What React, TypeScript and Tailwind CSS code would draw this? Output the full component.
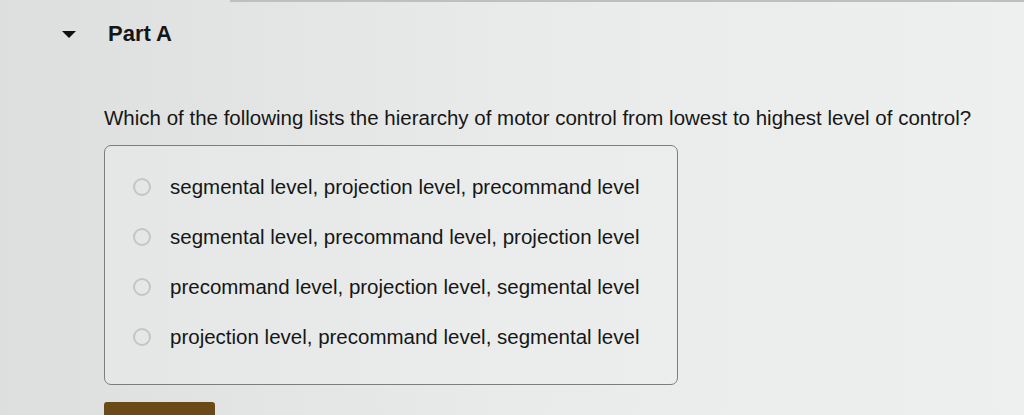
const options = [
  'segmental level, projection level, precommand level',
  'segmental level, precommand level, projection level',
  'precommand level, projection level, segmental level',
  'projection level, precommand level, segmental level',
]

export default function App() {
  return (
    <div
      className="h-[415px] w-[1024px] overflow-hidden bg-gradient-to-r from-[#dcdfdd] via-[#e8ebe9] to-[#eef0ef] text-[#161616]"
      style={{ fontFamily: '"Liberation Sans", Arial, sans-serif' }}
    >
      <div className="ml-[230px] h-[2px] bg-[#bdc0bf]" />

      {/* section header */}
      <div className="flex items-center pt-[20px]">
        <div className="ml-[62px] h-0 w-0 border-x-[7px] border-t-[7px] border-x-transparent border-t-[#111]" />
        <h2 className="ml-[32px] text-[22px] font-bold leading-[24px]">Part A</h2>
      </div>

      <div className="pl-[104px] pt-[60px]">
        <p className="text-[20.5px] leading-[24px]">
          Which of the following lists the hierarchy of motor control from lowest to highest level of control?
        </p>

        <div className="mt-[15px] w-[574px] rounded-[7px] border border-[#7b7e7d] bg-[#eef0ef]/40 pb-[22px] pt-[16px]">
          {options.map(opt => (
            <label key={opt} className="flex h-[50px] items-center">
              <span className="ml-[28px] h-[18px] w-[18px] rounded-full border-2 border-[#c4c6c6]" />
              <span className="ml-[19px] text-[20.5px]">{opt}</span>
            </label>
          ))}
        </div>

        <button className="mt-[17px] h-[40px] w-[111px] rounded-[3px] bg-[#6a4a17]" />
      </div>
    </div>
  )
}
